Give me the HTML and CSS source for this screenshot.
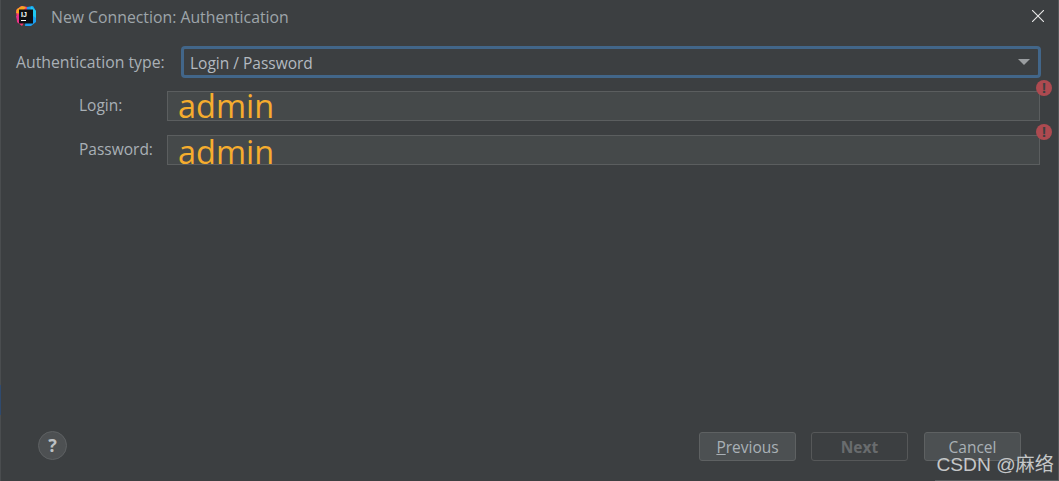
FILE: index.html
```html
<!DOCTYPE html>
<html>

<head>
    <title>New Connection: Authentication</title>
    <link rel="stylesheet" href="styles.css">
</head>

<body>
    <div class="dialog">
        <div class="titlebar">
            <svg class="logo" width="20" height="20" viewBox="0 0 20 20">
                <polygon points="0,4 5,0 12,1 12,10 6,20 1,16" fill="#f9386f"/>
                <polygon points="1,3 6,0 10,1 5,8 0,7" fill="#f7a51f"/>
                <polygon points="0,10 4,9 6,18 2,17" fill="#e62e8e"/>
                <polygon points="11,1 17,0 20,5 20,16 15,20 9,20" fill="#1a9ff0"/>
                <polygon points="15,0 20,5 20,12 14,8" fill="#1fc8f2"/>
                <rect class="logo-box" x="3" y="3.5" width="14" height="14"/>
                <text class="logo-text" x="5" y="10.5">IJ</text>
                <rect x="5" y="14" width="5" height="1" fill="#fff"/>
            </svg>
            <span class="title">New Connection: Authentication</span>
            <svg class="close" width="12" height="12" viewBox="0 0 12 12">
                <path d="M0 0L12 12M12 0L0 12" stroke="#e8e8e8" stroke-width="1.1" fill="none"/>
            </svg>
        </div>

        <div class="form">
            <div class="row row-type">
                <label class="type-label">Authentication type:</label>
                <div class="combo">
                    <span>Login / Password</span>
                    <span class="arrow"></span>
                </div>
            </div>
            <div class="row row-login">
                <label class="field-label">Login:</label>
                <div class="field">admin</div>
                <span class="error">!</span>
            </div>
            <div class="row row-password">
                <label class="field-label">Password:</label>
                <div class="field field-low">admin</div>
                <span class="error">!</span>
            </div>
        </div>

        <div class="footer">
            <div class="help">?</div>
            <div class="buttons">
                <button class="btn"><u>P</u>revious</button>
                <button class="btn btn-next">Next</button>
                <button class="btn">Cancel</button>
            </div>
        </div>

        <div class="edge-mark"></div>
        <div class="bottom-line"></div>
        <div class="watermark">CSDN @麻络</div>
    </div>
</body>

</html>
```

FILE: styles.css
```css
* {
    box-sizing: border-box;
}

html, body {
    margin: 0;
    height: 100%;
    overflow: hidden;
}

body {
    background-color: #3c3f41;
    font-family: "Open Sans", "Noto Sans", sans-serif;
    font-size: 15.8px;
    color: #a9b0b6;
}

.dialog {
    position: relative;
    width: 1059px;
    height: 481px;
    display: flex;
    flex-direction: column;
    border-left: 1px solid #4a4d4f;
    border-right: 1px solid #55585a;
}

.titlebar {
    height: 34px;
    display: flex;
    align-items: center;
    padding: 0 14px 0 15px;
}

.logo {
    margin-top: -3px;
}

.logo-box {
    fill: #0e0e12;
}

.logo-text {
    font-family: "Liberation Sans", sans-serif;
    font-size: 7px;
    font-weight: bold;
    fill: #fff;
}

.title {
    margin-left: 15px;
    color: #9ea5aa;
}

.close {
    margin-left: auto;
    margin-top: -3px;
}

.form {
    flex: 1;
    padding-top: 12px;
}

.row {
    position: relative;
    display: flex;
    align-items: center;
}

.row-type {
    height: 32px;
    padding: 0 17px 0 15px;
}

.row-login {
    height: 30px;
    margin-top: 13px;
    padding: 0 18px 0 78px;
}

.row-password {
    height: 30px;
    margin-top: 14px;
    padding: 0 18px 0 78px;
}

.type-label {
    width: 165px;
}

.field-label {
    width: 88px;
    margin-top: -3px;
    font-size: 15.5px;
}

.combo {
    flex: 1;
    height: 32px;
    display: flex;
    align-items: center;
    justify-content: space-between;
    padding: 2px 8px 0 6px;
    border: 3px solid #426689;
    border-radius: 4px;
    background-color: #3c3f41;
    font-size: 15.5px;
    color: #b4bac0;
}

.arrow {
    width: 0;
    height: 0;
    margin-top: -2px;
    border-left: 6px solid transparent;
    border-right: 6px solid transparent;
    border-top: 6px solid #9a9da0;
}

.field {
    flex: 1;
    height: 30px;
    padding-left: 10px;
    border: 1px solid #5b5e5f;
    background-color: #45494a;
    font-size: 32.5px;
    line-height: 28px;
    color: #f6ad2e;
}

.field-low {
    line-height: 31px;
}

.error {
    position: absolute;
    right: 6px;
    top: -11px;
    width: 16px;
    height: 16px;
    border-radius: 50%;
    background-color: #ad4a50;
    color: #3c3f41;
    font-family: "Liberation Sans", sans-serif;
    font-size: 15px;
    font-weight: bold;
    line-height: 16px;
    text-align: center;
}

.footer {
    height: 50px;
    margin-bottom: 1px;
    display: flex;
    align-items: flex-start;
    justify-content: space-between;
    padding: 0 37px;
}

.help {
    width: 29px;
    height: 29px;
    margin-top: 1px;
    border: 1px solid #5e6163;
    border-radius: 50%;
    background-color: #4d5052;
    color: #bcc0c3;
    font-size: 18px;
    font-weight: bold;
    line-height: 26px;
    text-align: center;
}

.buttons {
    display: flex;
    gap: 15px;
    margin-top: 2px;
    padding-right: 1px;
}

.btn {
    width: 97px;
    height: 29px;
    padding: 0;
    border: 1px solid #5e6162;
    border-radius: 3px;
    background-color: #4c5052;
    font-family: inherit;
    font-size: 15.5px;
    color: #a9b0b6;
}

.btn:last-child {
    margin-left: 1px;
    margin-right: -1px;
}

.btn-next {
    background-color: #3c3f41;
    border-color: #565859;
    font-weight: bold;
    color: #696c6e;
}

.edge-mark {
    position: absolute;
    left: -1px;
    top: 385px;
    width: 1px;
    height: 30px;
    background-color: #2f4a6e;
}

.bottom-line {
    position: absolute;
    right: -1px;
    bottom: 0;
    width: 124px;
    height: 1px;
    background-color: #5a5d5f;
}

.watermark {
    position: absolute;
    right: 4px;
    bottom: 4px;
    font-family: "Liberation Sans", "Noto Sans CJK SC", sans-serif;
    font-size: 19.2px;
    color: #c5c7c8;
}
```
